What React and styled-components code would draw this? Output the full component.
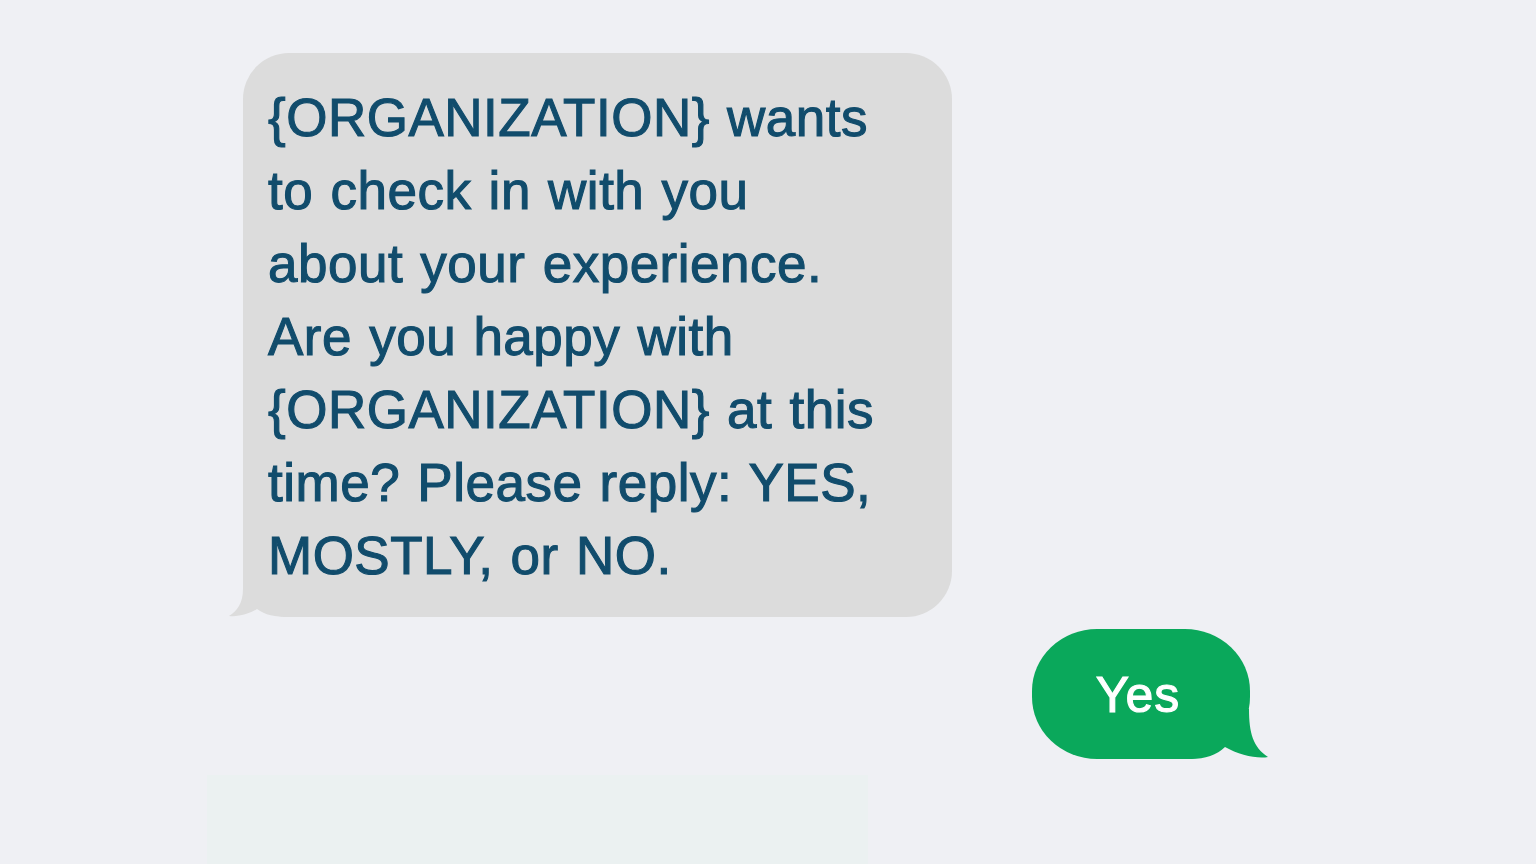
import React from "react";
import styled, { createGlobalStyle } from "styled-components";

const GlobalStyle = createGlobalStyle`
  html, body {
    margin: 0;
    padding: 0;
    background: #eff0f4;
    height: 100%;
    overflow: hidden;
  }
  #root {
    height: 100%;
  }
`;

const Screen = styled.div`
  width: 1536px;
  height: 864px;
  display: flex;
  flex-direction: column;
  font-family: "Liberation Sans", Arial, sans-serif;
  background: #eff0f4;
`;

const Bubble = styled.div`
  position: relative;
  box-sizing: border-box;
  background: ${(p) => p.bg};
  color: ${(p) => p.fg};
  -webkit-text-stroke: 1.1px ${(p) => p.fg};
`;

const Incoming = styled(Bubble)`
  margin: 53px 0 0 243px;
  width: 709px;
  height: 564px;
  border-radius: 46px;
  padding: 28px 24px 0 25px;
  font-size: 53px;
  line-height: 73px;
  letter-spacing: 0.5px;
  word-spacing: 2px;
`;

const Line = styled.div`
  position: relative;
  white-space: nowrap;
  height: 73px;
`;

const Outgoing = styled(Bubble)`
  margin: 12px 0 0 1032px;
  width: 218px;
  height: 130px;
  border-radius: 65px / 62px;
  display: flex;
  align-items: center;
  justify-content: center;
  padding: 2px 6px 0 0;
  font-size: 50px;
  letter-spacing: 1px;
`;

const Label = styled.span`
  position: relative;
`;

const Tail = styled.svg`
  position: absolute;
  bottom: 0;
  ${(p) => (p.side === "left" ? "left: -14px;" : "right: -21px;")}
  overflow: visible;
`;

const Faint = styled.div`
  margin: 16px 0 0 207px;
  width: 661px;
  flex: 1;
  background: #ebf1f1;
`;

const lines = [
  "{ORGANIZATION} wants",
  "to check in with you",
  "about your experience.",
  "Are you happy with",
  "{ORGANIZATION} at this",
  "time? Please reply: YES,",
  "MOSTLY, or NO.",
];

export default function App() {
  return (
    <>
      <GlobalStyle />
      <Screen>
        <Incoming bg="#dcdcdc" fg="#114c6c">
          <Tail side="left" width="60" height="50" viewBox="0 0 60 50">
            <path
              d="M14 0 L14 22 C14 36 8 44 0 49 C10 50 20 47 28 42 C36 48 46 50 60 50 L60 0 Z"
              fill="#dcdcdc"
            />
          </Tail>
          {lines.map((l, i) => (
            <Line key={i}>{l}</Line>
          ))}
        </Incoming>
        <Outgoing bg="#0aa85b" fg="#ffffff">
          <Tail side="right" width="90" height="50" viewBox="0 0 90 50">
            <path
              d="M0 0 L68 0 C68 24 72 38 87 48 C76 50 58 46 44 38 C36 46 24 50 10 50 L0 50 Z"
              fill="#0aa85b"
            />
          </Tail>
          <Label>Yes</Label>
        </Outgoing>
        <Faint />
      </Screen>
    </>
  );
}
